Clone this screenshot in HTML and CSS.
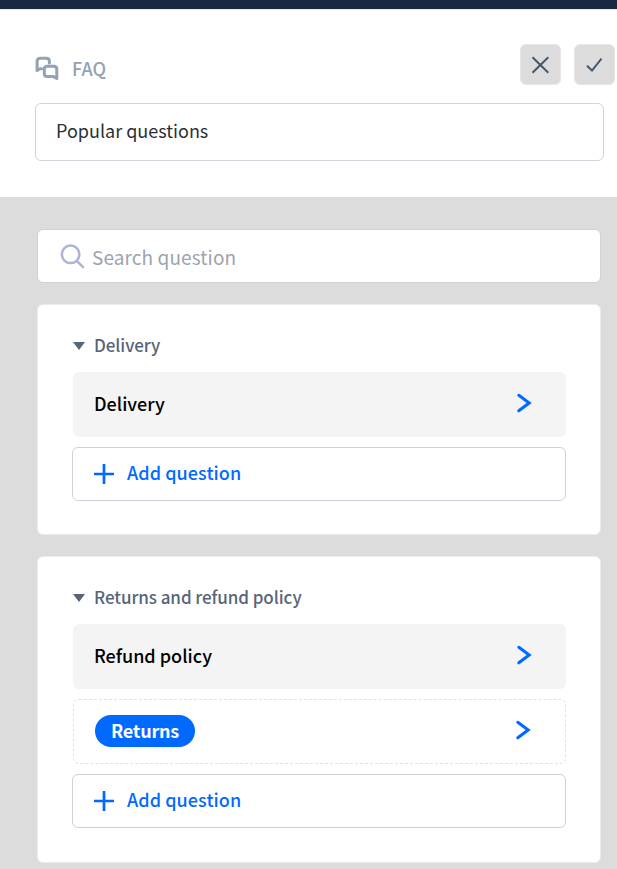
FILE: index.html
```html
<!DOCTYPE html>
<html lang="en">
<head>
<meta charset="utf-8">
<title>FAQ</title>
<link rel="stylesheet" href="styles.css">
</head>
<body>
<div class="topbar"></div>
<header class="header">
  <div class="title-row">
    <svg class="faq-icon" width="26" height="26" viewBox="0 0 26 26"><path d="M6.6 13.8H5L2.1 15.6V6.2Q2.1 3.2 5.1 3.2H11.4Q14.4 3.2 14.4 6.2V8"/><path d="M12.2 11.2H18.8Q21.8 11.2 21.8 14.2V23.4L18.6 21.6H12.2Q9.3 21.6 9.3 18.6V14.2Q9.3 11.2 12.2 11.2Z"/></svg>
    <h1 class="title">FAQ</h1>
    <div class="actions">
      <button class="action" aria-label="Cancel"><svg width="41" height="40" viewBox="0 0 41 40"><path d="M12.5 12.2L28.3 27.7M28.3 12.2L12.5 27.7"/></svg></button>
      <button class="action" aria-label="Save"><svg width="41" height="40" viewBox="0 0 41 40"><path d="M13 20.8L18 25.5L27.5 13.6"/></svg></button>
    </div>
  </div>
  <div class="name-field"><span class="name-text">Popular questions</span></div>
</header>
<main class="content">
  <div class="search">
    <svg class="search-icon" width="26" height="26" viewBox="0 0 26 26"><circle cx="10.6" cy="11.3" r="8.8"/><path d="M16.8 17.8L23 24.2"/></svg>
    <span class="search-text">Search question</span>
  </div>
  <section class="card">
    <h2 class="group"><i class="caret"></i><span class="group-text">Delivery</span></h2>
    <div class="row"><span class="row-text">Delivery</span><svg class="chevron" width="16" height="20" viewBox="0 0 16 20"><path d="M2.8 2.3L13.2 10L2.8 17.8"/></svg></div>
    <div class="add"><svg class="plus" width="20" height="20" viewBox="0 0 20 20"><path d="M0 10H20M10 0V20"/></svg><span class="add-text">Add question</span></div>
  </section>
  <section class="card card-last">
    <h2 class="group"><i class="caret"></i><span class="group-text">Returns and refund policy</span></h2>
    <div class="row"><span class="row-text">Refund policy</span><svg class="chevron" width="16" height="20" viewBox="0 0 16 20"><path d="M2.8 2.3L13.2 10L2.8 17.8"/></svg></div>
    <div class="row dashed"><span class="pill"><span class="pill-text">Returns</span></span><svg class="chevron" width="16" height="20" viewBox="0 0 16 20"><path d="M2.8 2.3L13.2 10L2.8 17.8"/></svg></div>
    <div class="add"><svg class="plus" width="20" height="20" viewBox="0 0 20 20"><path d="M0 10H20M10 0V20"/></svg><span class="add-text">Add question</span></div>
  </section>
</main>
</body>
</html>
```
FILE: styles.css
```css
* { box-sizing: border-box; margin: 0; padding: 0; }
body {
  background: #dcdcdc;
  font-family: "Noto Sans CJK SC", "Open Sans", sans-serif;
  font-size: 18px;
  line-height: 26px;
  overflow: hidden;
  height: 869px;
}
svg { display: block; flex: none; fill: none; stroke: currentColor; }
span { white-space: nowrap; }
.topbar { height: 9px; background: #182841; }
.header { height: 188px; background: #fff; border-top: 1px solid #e1e5ee; padding: 34px 2px 0 35px; }
.title-row { display: flex; height: 41px; }
.faq-icon { margin-top: 11px; color: #94a2b3; stroke-width: 3; stroke-linejoin: round; stroke-linecap: round; }
.title { margin: 11px 0 0 11px; font-size: 18px; font-weight: 500; line-height: 26px; color: #94a2b3; letter-spacing: 0.1px; }
.actions { display: flex; gap: 13px; margin-left: auto; }
.action { width: 41px; height: 41px; border: 1px solid #e6e6e6; border-radius: 6px; background: #dcdcdc; color: #45586b; display: flex; align-items: center; justify-content: center; stroke-width: 2; }
.name-field { width: 569px; height: 58px; margin-top: 18px; border: 1px solid #d0d4dc; border-radius: 6px; padding: 13px 20px; font-size: 18px; color: #2b2f35; }
.content { padding: 32px 16px 0 37px; }
.search { display: flex; align-items: center; height: 54px; margin-bottom: 21px; padding-left: 22px; background: #fff; border: 1px solid #cdd2d9; border-radius: 6px; color: #9ca4af; font-size: 19px; letter-spacing: 0.1px; }
.search-icon { color: #aeb4d3; stroke-width: 2.5; stroke-linecap: round; margin-right: 6px; }
.search-text { padding-top: 1px; }
.card { background: #fff; border: 1px solid #ececec; border-radius: 6px; padding: 27px 34px 33px 35px; margin-bottom: 21px; }
.card-last { padding-bottom: 34px; }
.group { display: flex; align-items: center; height: 28px; margin-bottom: 12px; font-size: 17px; font-weight: 500; letter-spacing: -0.07px; color: #57647a; }
.group-text { padding-bottom: 2px; }
.caret { width: 12px; height: 8px; margin-right: 9px; background: #57647a; clip-path: polygon(0 0, 100% 0, 50% 100%); }
.row { display: flex; align-items: center; justify-content: space-between; height: 65px; margin-bottom: 10px; padding: 0 34px 0 21px; background: #f4f4f4; border-radius: 6px; color: #000; font-weight: 500; }
.row-text { padding-bottom: 3px; }
.chevron { color: #0069ff; stroke-width: 3; stroke-linecap: round; margin-top: -3px; }
.dashed { background: #fff; border: 1px dashed #dfe1e3; }
.pill { height: 32px; width: 100px; border-radius: 16px; background: #006aff; color: #fff; font-weight: 700; letter-spacing: -0.25px; display: flex; align-items: center; justify-content: center; margin-top: -1px; }
.pill-text { padding-bottom: 2px; }
.add { display: flex; align-items: center; height: 54px; margin-left: -1px; padding-left: 21px; border: 1px solid #cdd1d9; border-radius: 6px; color: #006aff; font-weight: 500; letter-spacing: 0.07px; }
.add-text { padding-bottom: 4px; }
.plus { stroke-width: 2.7; margin: -1px 13.5px 0 -0.5px; }
```
